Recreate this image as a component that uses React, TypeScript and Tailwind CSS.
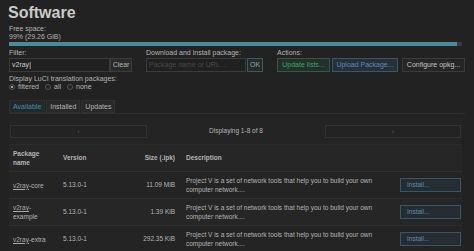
export default function App() {
  const rows = [
    { name: "v2ray", rest: "-core", size: "11.09 MiB", twoLine: false },
    { name: "v2ray", rest: "-example", size: "1.39 KiB", twoLine: true },
    { name: "v2ray", rest: "-extra", size: "292.35 KiB", twoLine: false },
  ];

  return (
    <div
      className="w-[474px] h-[251px] overflow-hidden bg-[#222222] text-[#b4b4b4] text-[7px] leading-[8px] px-[9px]"
      style={{ fontFamily: '"Liberation Sans", Arial, sans-serif' }}
    >
      <h2 className="h-[20px] text-[16px] leading-[20px] font-bold text-[#cacaca] mt-[3px] -ml-[1px]">Software</h2>

      <div className="mt-[2px]">Free space:</div>
      <div>99% (29.26 GiB)</div>
      <div className="mt-[1px] h-[4px] w-[453px] bg-[#3a3a3a] rounded-[1px]">
        <div className="h-full w-[99%] bg-[#4d8a99]" />
      </div>

      <div className="flex mt-[3px]">
        <div className="w-[133px]">
          <div>Filter:</div>
          <div className="flex mt-[1px]">
            <div className="w-[101px] h-[14px] border border-[#3b3b3b] bg-[#202020] px-[2px] leading-[12px] text-[#cfcfcf]">
              v2ray<span className="text-[#ddd]">|</span>
            </div>
            <div className="w-[22px] h-[14px] border border-[#3b3b3b] bg-[#2a2a2a] leading-[12px] text-center">Clear</div>
          </div>
        </div>
        <div className="ml-[9px] w-[120px]">
          <div>Download and install package:</div>
          <div className="flex mt-[1px]">
            <div className="w-[100px] h-[14px] border border-[#3b3b3b] bg-[#202020] px-[2px] leading-[12px] text-[#4a4a4a]">
              Package name or URL...
            </div>
            <div className="ml-[1px] w-[16px] h-[14px] border border-[#3f5a5a] bg-[#252a2a] leading-[12px] text-center text-[#8aa]">OK</div>
          </div>
        </div>
        <div className="ml-[14px]">
          <div>Actions:</div>
          <div className="flex mt-[1px] gap-[2px]">
            <div className="w-[53px] h-[14px] border border-[#2e5a46] bg-[#23302a] leading-[12px] text-center text-[#3fa06f]">Update lists...</div>
            <div className="w-[66px] h-[14px] border border-[#3a5664] bg-[#26303a] leading-[12px] text-center text-[#5b8fb0]">Upload Package...</div>
            <div className="ml-[2px] w-[63px] h-[14px] border border-[#3b3b3b] bg-[#262626] leading-[12px] text-center text-[#c4c4c4]">Configure opkg...</div>
          </div>
        </div>
      </div>

      <div className="mt-[3px]">Display LuCI translation packages:</div>
      <div className="flex items-center gap-[3px] h-[8px]">
        <span className="w-[6px] h-[6px] rounded-full border border-[#555] flex items-center justify-center">
          <span className="w-[2px] h-[2px] rounded-full bg-[#ccc]" />
        </span>
        <span>filtered</span>
        <span className="ml-[3px] w-[6px] h-[6px] rounded-full border border-[#555]" />
        <span>all</span>
        <span className="ml-[3px] w-[6px] h-[6px] rounded-full border border-[#555]" />
        <span>none</span>
      </div>

      <div className="flex mt-[9px] border-b border-[#303030] gap-[1px]">
        <div className="h-[13px] px-[3px] bg-[#1f2a2c] border border-[#303030] leading-[11px] text-[#4b8f9e]">Available</div>
        <div className="h-[13px] px-[3px] bg-[#292929] border border-[#303030] leading-[11px]">Installed</div>
        <div className="h-[13px] px-[3px] bg-[#292929] border border-[#303030] leading-[11px]">Updates</div>
      </div>

      <div className="mt-[4px] w-[453px] bg-[#242424] text-[6.5px]">
        <div className="flex items-center h-[27px] px-[1px] border-b border-[#2c2c2c]">
          <div className="w-[137px] h-[13px] border border-[#333] bg-[#232323] flex items-center justify-center text-[#666] text-[6px]">‹</div>
          <div className="flex-1 text-center">Displaying 1-8 of 8</div>
          <div className="w-[136px] h-[13px] border border-[#333] bg-[#232323] flex items-center justify-center text-[#666] text-[6px]">›</div>
        </div>

        <div className="flex h-[27px] items-center font-bold bg-[#262626] border-b border-[#303030]">
          <div className="w-[50px] pl-[4px] leading-[9px]">Package<br />name</div>
          <div className="w-[80px] pl-[4px]">Version</div>
          <div className="w-[36px] text-right whitespace-nowrap">Size (.ipk)</div>
          <div className="pl-[11px]">Description</div>
        </div>

        {rows.map((r, i) => (
          <div
            key={i}
            className={`flex items-center h-[27px] border-b border-[#2e2e2e] ${i % 2 === 1 ? "bg-[#262626]" : "bg-[#242424]"}`}
          >
            <div className="w-[50px] pl-[4px] leading-[9px]">
              <span className="underline text-[#a9a9a9]">{r.name}</span>
              {r.twoLine ? (
                <>
                  -<br />
                  {r.rest.slice(1)}
                </>
              ) : (
                r.rest
              )}
            </div>
            <div className="w-[80px] pl-[4px]">5.13.0-1</div>
            <div className="w-[36px] text-right whitespace-nowrap">{r.size}</div>
            <div className="w-[225px] pl-[11px] pr-[20px] leading-[9px]">
              Project V is a set of network tools that help you to build your own computer network....
            </div>
            <div className="w-[61px] h-[14px] border border-[#3a5664] bg-[#252d33] leading-[12px] pl-[6px] text-[#5b8fb0]">Install...</div>
          </div>
        ))}
      </div>
    </div>
  );
}
